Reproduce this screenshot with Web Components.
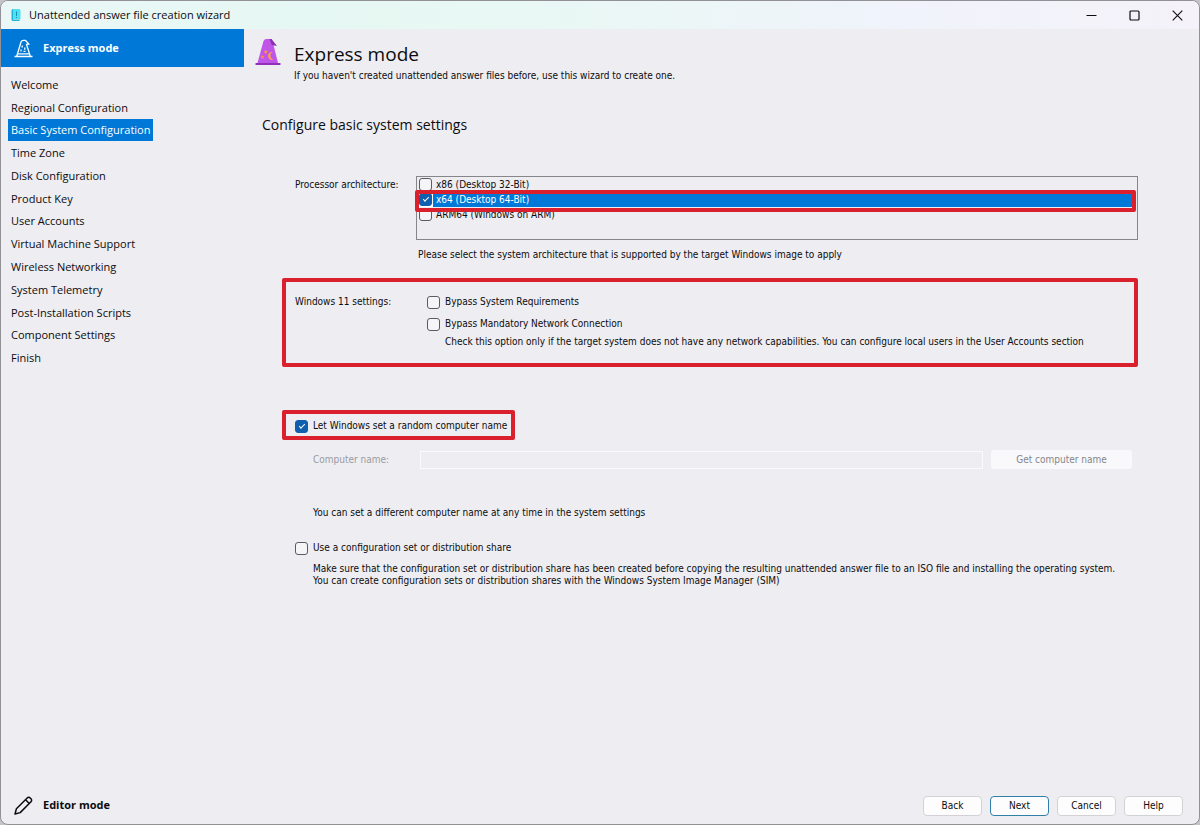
<!DOCTYPE html>
<html lang="en">
<head>
<meta charset="utf-8">
<meta name="viewport" content="width=device-width, initial-scale=1">
<title>Unattended answer file creation wizard</title>
<style>
  :root {
    --ui: "Open Sans", "Noto Sans", sans-serif;
    --form: "DejaVu Sans Condensed", "DejaVu Sans", sans-serif;
    --accent: #0078d7;
    --mark: #d9202c;
    --ink: #0c0c0e;
  }

  body {
    margin: 0;
    background: #c4c4c8;
    color: var(--ink);
    font: 10px/14px var(--form);
  }
</style>
</head>
<body>
<wizard-window>
  <title-bar slot="title">Unattended answer file creation wizard</title-bar>
  <mode-sidebar slot="sidebar"></mode-sidebar>
  <page-header slot="header">
    Express mode
    <span slot="description">If you haven't created unattended answer files before, use this wizard to create one.</span>
  </page-header>
  <system-settings></system-settings>
  <wizard-actions slot="footer"></wizard-actions>
</wizard-window>

<script>
class WizardWindow extends HTMLElement {
  constructor() {
    super();
    this.attachShadow({ mode: 'open' });

    this.shadowRoot.innerHTML = `
      <style>
        :host {
          display: flex;
          flex-direction: column;
          box-sizing: border-box;
          min-height: 100vh;
          border: 1px solid #929296;
          border-radius: 8px;
          background: #eeedf2;
          overflow: hidden;
        }

        .body {
          flex: 1;
          display: grid;
          grid-template-columns: 243px 1fr;
        }

        main {
          display: flex;
          flex-direction: column;
        }

        .page {
          flex: 1;
        }
      </style>

      <slot name="title"></slot>
      <div class="body">
        <slot name="sidebar"></slot>
        <main>
          <slot name="header"></slot>
          <div class="page"><slot></slot></div>
          <slot name="footer"></slot>
        </main>
      </div>
    `;
  }
}

class TitleBar extends HTMLElement {
  constructor() {
    super();
    this.attachShadow({ mode: 'open' });

    this.shadowRoot.innerHTML = `
      <style>
        :host {
          display: flex;
          align-items: center;
          height: 28px;
          padding-left: 9px;
          background: linear-gradient(90deg, #eaf7f6, #e6f8f3 25%, #e9f8f4 45%, #f0f3fb 75%, #f5f2f9);
          font: 11px/16px var(--ui);
        }

        .text {
          flex: 1;
          margin-left: 7px;
        }

        button {
          display: grid;
          place-items: center;
          width: 43px;
          height: 28px;
          padding: 0;
          border: 0;
          background: none;
          color: var(--ink);
        }
      </style>

      <svg width="12" height="14" viewBox="0 0 12 14" aria-hidden="true">
        <path d="M3 1h6a1.500 1.500 0 0 1 1.500 1.500V11H3z" fill="#4fe0f2"/>
        <path d="M3 1a1.500 1.500 0 0 0-1.500 1.500V11.500A1.500 1.500 0 0 0 3 13h5.500a1.500 1.500 0 0 0 1.500-1.500H3z" fill="#22b4d6"/>
        <path d="M6.500 3.500V8M6.500 9v1" stroke="#1390b4"/>
      </svg>
      <span class="text"><slot></slot></span>
      <button type="button" aria-label="Minimize">
        <svg width="11" height="11" viewBox="0 0 11 11"><path d="M.5 5.500h10" stroke="currentColor"/></svg>
      </button>
      <button type="button" aria-label="Maximize">
        <svg width="11" height="11" viewBox="0 0 11 11"><rect x="1" y="1" width="9" height="9" rx="1" fill="none" stroke="currentColor" stroke-width="1.200"/></svg>
      </button>
      <button type="button" aria-label="Close">
        <svg width="11" height="11" viewBox="0 0 11 11"><path d="M.7.7l9.600 9.600M10.300.7L.7 10.300" stroke="currentColor" stroke-width="1.100"/></svg>
      </button>
    `;
  }
}

class ModeSidebar extends HTMLElement {
  constructor() {
    super();
    this.attachShadow({ mode: 'open' });

    const steps = [
      'Welcome',
      'Regional Configuration',
      'Basic System Configuration',
      'Time Zone',
      'Disk Configuration',
      'Product Key',
      'User Accounts',
      'Virtual Machine Support',
      'Wireless Networking',
      'System Telemetry',
      'Post-Installation Scripts',
      'Component Settings',
      'Finish'
    ];
    const current = 2;

    this.shadowRoot.innerHTML = `
      <style>
        :host {
          display: flex;
          flex-direction: column;
          font: 11px/16px var(--ui);
        }

        .mode {
          display: flex;
          align-items: center;
          gap: 10px;
          height: 38px;
          padding: 0 0 0 13px;
          border: 0;
          background: none;
          color: var(--ink);
          font: bold 11px/16px var(--ui);
          text-align: left;
        }

        .mode.active {
          background: var(--accent);
          color: #fff;
        }

        ul {
          display: grid;
          grid-auto-rows: 1fr;
          flex: 1;
          max-height: 296px;
          margin: 6px 0 auto 7px;
          padding: 0;
          list-style: none;
        }

        li {
          display: flex;
        }

        a {
          display: flex;
          align-items: center;
          padding: 1px 3px 0;
          color: inherit;
          text-decoration: none;
        }

        a[aria-current] {
          background: var(--accent);
          color: #fff;
        }
      </style>

      <button class="mode active" type="button">
        <svg width="19" height="19" viewBox="0 0 19 19" fill="none" stroke="currentColor" stroke-width="1.300" aria-hidden="true">
          <path d="M.5 17.500h18M2.800 17L7 3Q7.700 1.300 9.300 1.300h2l3.700 3.900-2.500.2L16.200 17" stroke-linejoin="round"/>
          <path d="M3.300 14.800h12.400"/>
          <path d="M8.200 6.500v2M10.800 8.500v2.200M7 10.500v2M9.500 12.300h2"/>
        </svg>
        Express mode
      </button>
      <ul>
        ${steps.map((step, i) => `<li><a href="#step-${i + 1}"${i === current ? ' aria-current="step"' : ''}>${step}</a></li>`).join('')}
      </ul>
      <button class="mode" type="button">
        <svg width="19" height="19" viewBox="0 0 19 19" fill="none" stroke="currentColor" stroke-width="1.500" stroke-linejoin="round" aria-hidden="true">
          <path d="M1 18l1.400-5.200L13.200 2a2.100 2.100 0 0 1 3 0l.8.8a2.100 2.100 0 0 1 0 3L6.200 16.600z"/>
          <path d="M11.500 3.700l3.800 3.800"/>
        </svg>
        Editor mode
      </button>
    `;
  }
}

class PageHeader extends HTMLElement {
  constructor() {
    super();
    this.attachShadow({ mode: 'open' });

    this.shadowRoot.innerHTML = `
      <style>
        :host {
          display: flex;
          gap: 12px;
          padding: 8px 62px 0 10px;
        }

        h1 {
          margin: 4px 0 0;
          font: 19px/26px var(--ui);
        }

        p {
          margin: 2px 0 0;
        }
      </style>

      <svg width="28" height="30" viewBox="0 0 28 30" aria-hidden="true">
        <path d="M3.500 26L9.500 4Q10.200 2 12.500 2h5l2 6 4.500 18z" fill="#c055ea"/>
        <path d="M15.500 2h2l5.500 7-5.200-1z" fill="#8a30b0"/>
        <path d="M1.500 26h25v2h-25z" fill="#9030b8"/>
        <path d="M18.800 15a4 4 0 1 0 .7 7.600 4 4 0 0 1-.7-7.600z" fill="#ffa04a"/>
        <path d="M11.800 12.500l.7 1.400 1.500.2-1.100 1.100.2 1.500-1.300-.7-1.400.7.300-1.500-1.100-1.100 1.500-.2zM8.500 18l.6 1.200 1.300.2-1 1 .2 1.300-1.100-.6-1.200.6.200-1.300-1-1 1.400-.2z" fill="#ff9052"/>
      </svg>
      <div>
        <h1><slot></slot></h1>
        <p><slot name="description"></slot></p>
      </div>
    `;
  }
}

class CheckOption extends HTMLElement {
  constructor() {
    super();
    this.attachShadow({ mode: 'open' });

    this.shadowRoot.innerHTML = `
      <style>
        :host {
          display: flex;
        }

        label {
          display: flex;
          align-items: center;
          gap: var(--check-gap, 5px);
        }

        input {
          appearance: none;
          flex: none;
          display: grid;
          place-items: center;
          box-sizing: border-box;
          width: 13px;
          height: 13px;
          margin: 0;
          border: 1px solid #5c5c60;
          border-radius: 3px;
          background: #f5f5f8;
        }

        input:checked {
          border-color: #0f5fae;
          background: #0f5fae;
        }

        input:checked::after {
          content: "";
          width: 5px;
          height: 2px;
          border: solid #fff;
          border-width: 0 0 1px 1px;
          transform: translateY(-1px) rotate(-45deg);
        }
      </style>

      <label>
        <input type="checkbox"${this.hasAttribute('checked') ? ' checked' : ''}>
        <span><slot></slot></span>
      </label>
    `;
  }
}

// Red frame that calls attention to a group of settings
class MarkFrame extends HTMLElement {
  constructor() {
    super();
    this.attachShadow({ mode: 'open' });

    this.shadowRoot.innerHTML = `
      <style>
        :host {
          display: block;
          box-sizing: border-box;
          border: 4px solid var(--mark);
          border-radius: 2px;
        }
      </style>

      <slot></slot>
    `;
  }
}

class SystemSettings extends HTMLElement {
  constructor() {
    super();
    this.attachShadow({ mode: 'open' });

    this.shadowRoot.innerHTML = `
      <style>
        :host {
          display: block;
          padding: 32px 61px 0 18px;
        }

        h2 {
          margin: 0 0 41px;
          font: 14px/20px var(--ui);
        }

        p {
          margin: 0;
        }

        form {
          margin-left: 20px;
        }

        .arch {
          display: grid;
          grid-template-columns: 121px 1fr;
          margin: 0 0 16px 13px;
        }

        .arch > span {
          padding-top: 2px;
        }

        .list {
          --check-gap: 4px;
          position: relative;
          box-sizing: border-box;
          height: 64px;
          border: 1px solid #85858a;
        }

        .list check-option {
          height: 15px;
          padding-left: 2px;
        }

        .list .selected {
          margin-right: 4px;
          background: linear-gradient(90deg, #fff 16px, var(--accent) 0);
          color: #fff;
        }

        .list mark-frame {
          position: absolute;
          top: 13px;
          left: -2px;
          right: 1px;
          height: 22px;
          pointer-events: none;
        }

        .arch p {
          margin: 8px 0 0 2px;
        }

        .win11 {
          display: grid;
          grid-template-columns: 132px 1fr;
          padding: 13px 9px 14px;
        }

        .win11 check-option {
          margin-bottom: 8px;
        }

        .win11 check-option:last-of-type {
          margin-bottom: 4px;
        }

        .win11 p {
          padding-left: 18px;
        }

        .random {
          width: fit-content;
          margin: 43px 0 10px;
          padding: 5px 4px 3px 9px;
        }

        .name {
          display: grid;
          grid-template-columns: 107px 1fr 141px;
          align-items: center;
          margin: 0 6px 37px 31px;
          color: #9b9ba0;
        }

        .name input {
          box-sizing: border-box;
          min-width: 0;
          height: 18px;
          margin-right: 8px;
          padding: 0 4px;
          border: 1px solid #fafafc;
          background: #eeedf2;
          font: inherit;
        }

        .name button {
          height: 19px;
          padding: 0;
          border: 0;
          border-radius: 3px;
          background: #f9f9fb;
          color: #85858a;
          font: inherit;
        }

        .note {
          margin-left: 31px;
        }

        .share {
          margin: 21px 0 8px 13px;
        }

        .small {
          line-height: 12px;
        }
      </style>

      <h2>Configure basic system settings</h2>
      <form>
        <div class="arch">
          <span id="arch-label">Processor architecture:</span>
          <div>
            <div class="list" role="group" aria-labelledby="arch-label">
              <check-option>x86 (Desktop 32-Bit)</check-option>
              <check-option class="selected" checked>x64 (Desktop 64-Bit)</check-option>
              <check-option>ARM64 (Windows on ARM)</check-option>
              <mark-frame></mark-frame>
            </div>
            <p>Please select the system architecture that is supported by the target Windows image to apply</p>
          </div>
        </div>

        <mark-frame class="win11">
          <span>Windows 11 settings:</span>
          <div>
            <check-option>Bypass System Requirements</check-option>
            <check-option>Bypass Mandatory Network Connection</check-option>
            <p>Check this option only if the target system does not have any network capabilities. You can configure local users in the User Accounts section</p>
          </div>
        </mark-frame>

        <mark-frame class="random">
          <check-option checked>Let Windows set a random computer name</check-option>
        </mark-frame>

        <div class="name">
          <label for="computer-name">Computer name:</label>
          <input id="computer-name" type="text" disabled>
          <button type="button" disabled>Get computer name</button>
        </div>

        <p class="note">You can set a different computer name at any time in the system settings</p>
        <check-option class="share">Use a configuration set or distribution share</check-option>
        <p class="note small">Make sure that the configuration set or distribution share has been created before copying the resulting unattended answer file to an ISO file and installing the operating system.</p>
        <p class="note small">You can create configuration sets or distribution shares with the Windows System Image Manager (SIM)</p>
      </form>
    `;
  }
}

class WizardActions extends HTMLElement {
  constructor() {
    super();
    this.attachShadow({ mode: 'open' });

    this.shadowRoot.innerHTML = `
      <style>
        :host {
          display: flex;
          justify-content: flex-end;
          gap: 8px;
          padding: 0 16px 8px;
        }

        button {
          width: 59px;
          height: 20px;
          padding: 0;
          border: 1px solid #d2d2d6;
          border-radius: 4px;
          background: #fdfdfe;
          color: var(--ink);
          font: inherit;
        }

        .default {
          border-color: #2f7fa8;
        }
      </style>

      <button type="button">Back</button>
      <button type="button" class="default">Next</button>
      <button type="button">Cancel</button>
      <button type="button">Help</button>
    `;
  }
}

customElements.define('title-bar', TitleBar);
customElements.define('mode-sidebar', ModeSidebar);
customElements.define('page-header', PageHeader);
customElements.define('check-option', CheckOption);
customElements.define('mark-frame', MarkFrame);
customElements.define('system-settings', SystemSettings);
customElements.define('wizard-actions', WizardActions);
customElements.define('wizard-window', WizardWindow);
</script>
</body>
</html>
